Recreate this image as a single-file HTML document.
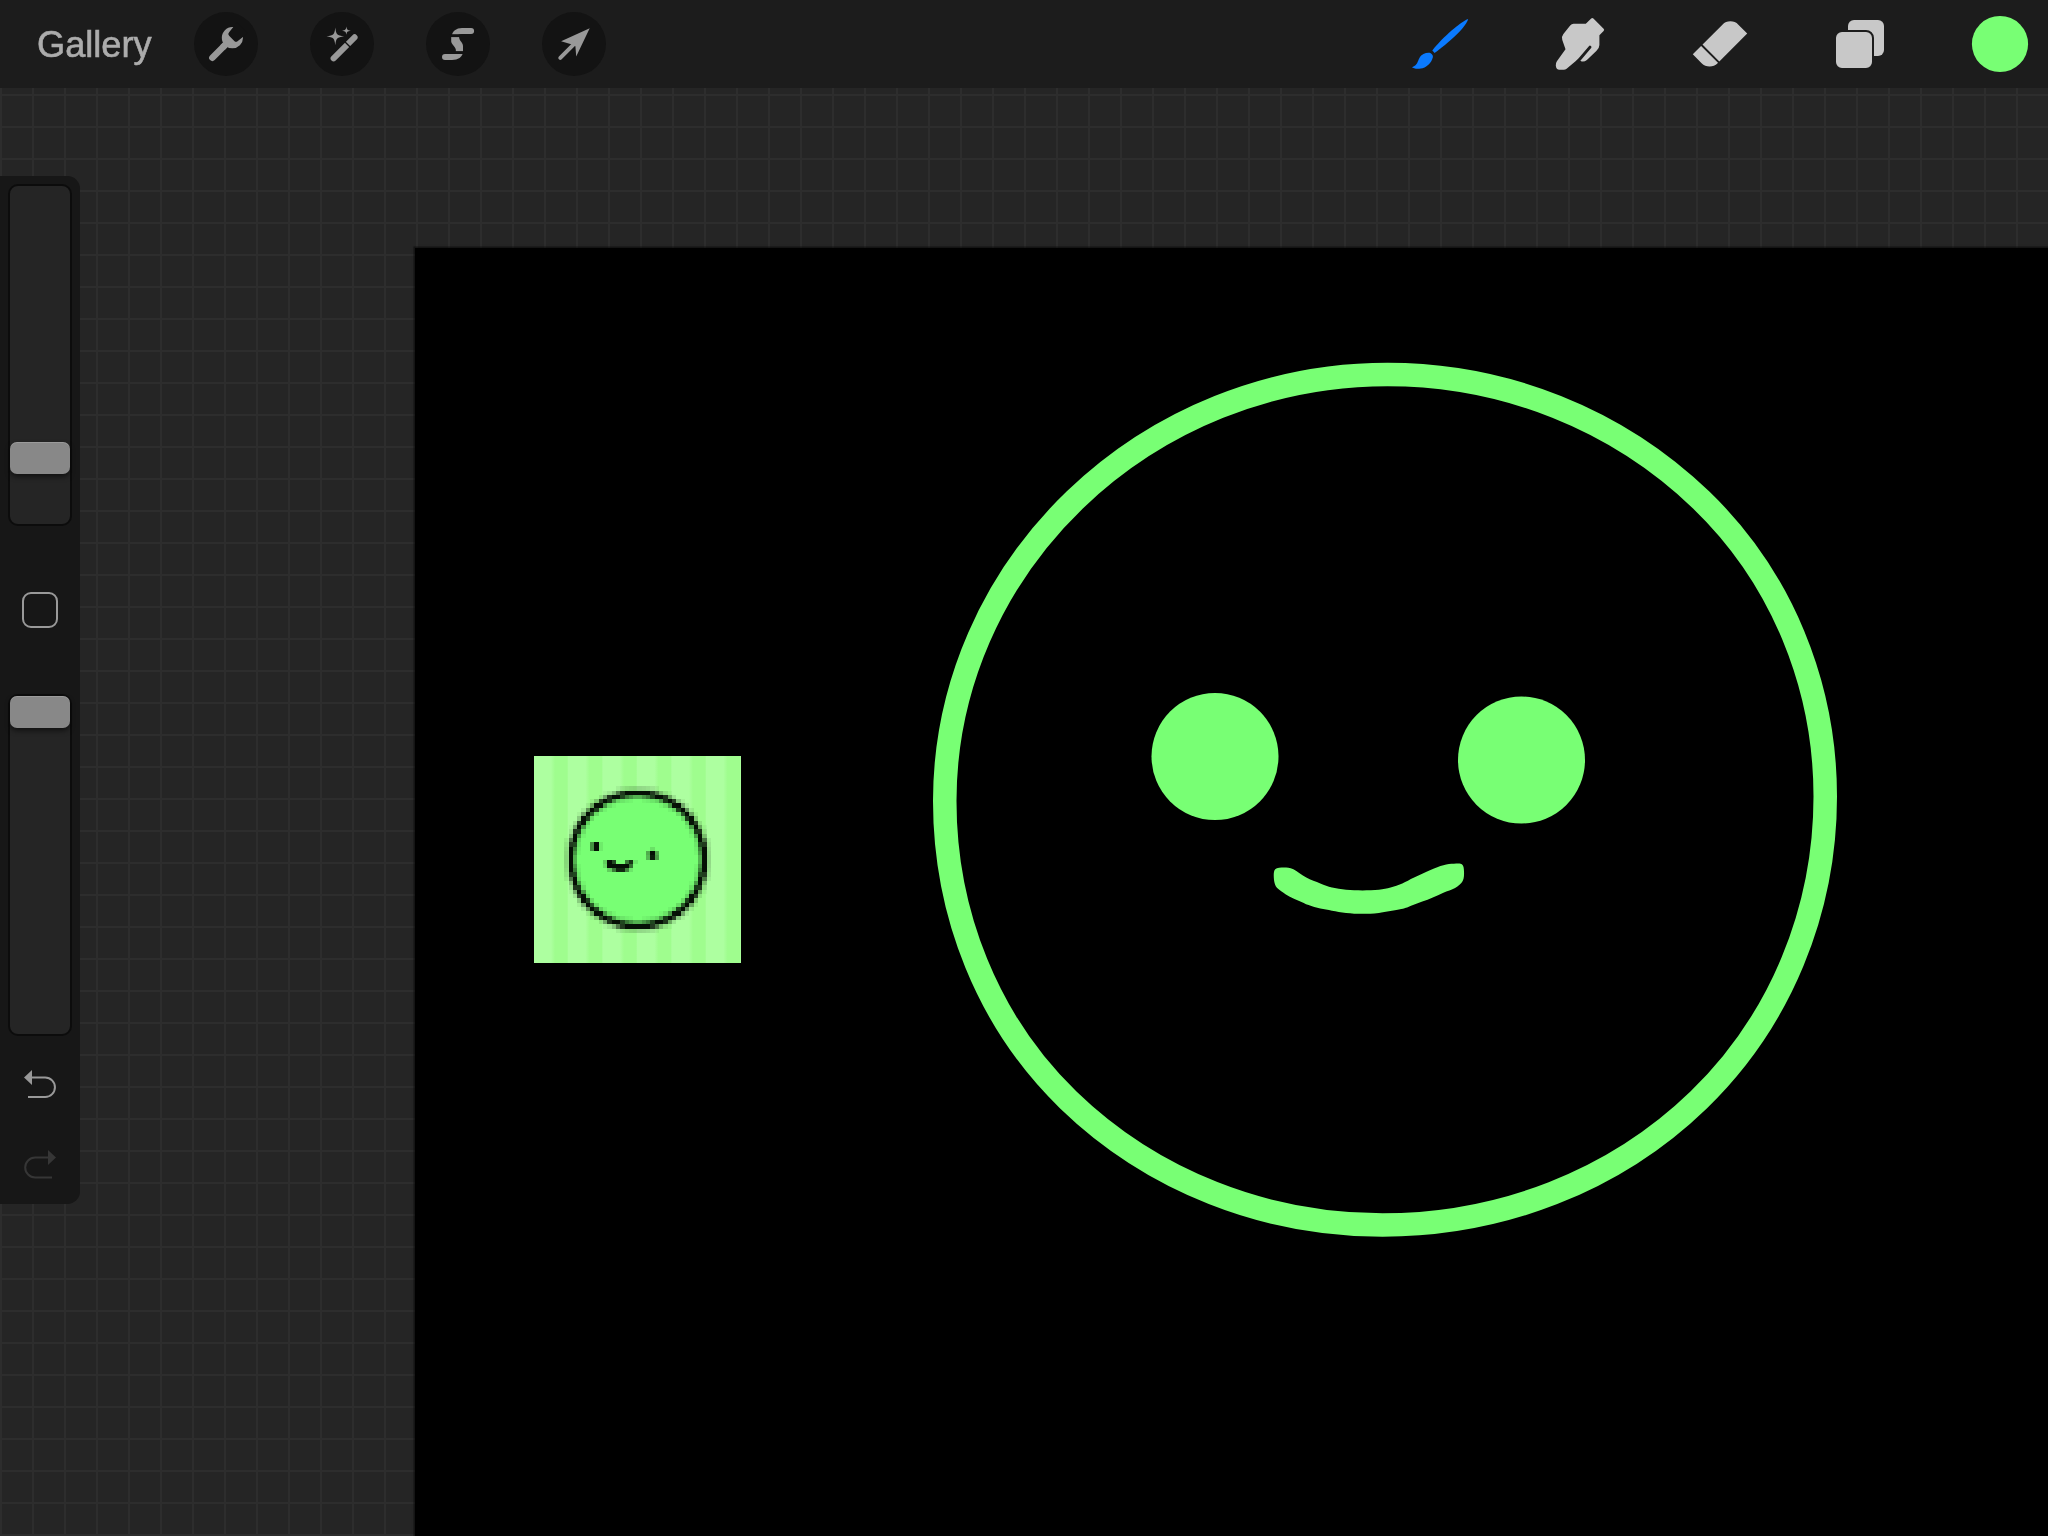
<!DOCTYPE html>
<html>
<head>
<meta charset="utf-8">
<title>Procreate</title>
<style>
html,body{margin:0;padding:0;}
body{width:2048px;height:1536px;overflow:hidden;position:relative;background:#252525;font-family:"Liberation Sans",sans-serif;}
#grid{position:absolute;left:0;top:0;width:2048px;height:1536px;
 background-color:#252525;
 background-image:
  linear-gradient(to right,#2d2d2d 0,#2d2d2d 2px,transparent 2px),
  linear-gradient(to bottom,#2d2d2d 0,#2d2d2d 2px,transparent 2px);
 background-size:32px 32px,32px 32px;
 background-position:0 0,0 30px;}
#canvas{position:absolute;left:415px;top:248px;width:1633px;height:1288px;background:#000;box-shadow:0 0 0 1.6px rgba(0,0,0,0.38),0 0 3px 1.5px rgba(0,0,0,0.2);}
#topbar{position:absolute;left:0;top:0;width:2048px;height:88px;background:#1c1c1c;}
#gallery{position:absolute;left:36.6px;top:24.2px;font-size:36.2px;line-height:42px;color:#adadad;letter-spacing:0px;-webkit-text-stroke:0.6px #adadad;will-change:transform;opacity:0.999;}
#sidebar{position:absolute;left:0;top:176px;width:80px;height:1028px;background:#171717;border-radius:0 12.5px 12.5px 0;}
.track{position:absolute;left:8px;width:60px;height:338px;border:2px solid #0c0c0c;border-radius:10px;background:#252525;}
.thumb{position:absolute;left:10px;width:60px;height:32px;border-radius:7px;background:#888888;box-shadow:0 3px 5px rgba(0,0,0,0.5), inset 0 1px 0 rgba(255,255,255,0.16);}
#sq{position:absolute;left:22px;top:416px;width:32px;height:32px;border:2px solid #999;border-radius:9px;}
svg{position:absolute;left:0;top:0;}
</style>
</head>
<body>
<div id="grid"></div>
<div id="canvas"></div>

<svg id="art" width="2048" height="1536" viewBox="0 0 2048 1536">
  <!-- big face -->
  <path d="M1825.25,796.50 C1825.25,910.65 1780.62,1020.62 1698.60,1100.00 C1614.10,1181.78 1500.10,1225.00 1382.50,1225.00 C1265.51,1225.00 1152.34,1181.40 1068.30,1100.00 C987.64,1021.88 944.75,913.29 944.75,801.00 C944.75,687.18 992.73,578.97 1074.70,500.00 C1158.66,419.12 1270.92,374.50 1387.50,374.50 C1504.37,374.50 1617.06,418.89 1701.20,500.00 C1781.53,577.44 1825.25,684.92 1825.25,796.50 Z" fill="none" stroke="#78ff74" stroke-width="23.5"/>
  <circle cx="1215" cy="756.5" r="63.5" fill="#78ff74"/>
  <circle cx="1521.5" cy="760" r="63.5" fill="#78ff74"/>
  <path d="M1275.2,869.3 C1276.9,867.6 1281.0,867.5 1284.0,867.5 C1287.0,867.5 1289.6,867.6 1293.4,869.3 C1297.1,871.0 1301.8,875.2 1306.3,877.5 C1310.7,879.8 1316.0,881.7 1320.3,883.4 C1324.6,885.0 1327.7,886.4 1332.0,887.5 C1336.3,888.5 1341.0,889.3 1346.1,889.8 C1351.2,890.3 1357.0,890.4 1362.5,890.4 C1368.0,890.4 1374.2,890.3 1378.9,889.8 C1383.6,889.3 1386.7,888.5 1390.6,887.5 C1394.5,886.4 1398.4,885.0 1402.3,883.4 C1406.3,881.7 1409.4,879.7 1414.1,877.5 C1418.8,875.3 1425.6,871.9 1430.5,869.9 C1435.4,867.8 1439.5,866.2 1443.4,865.2 C1447.3,864.2 1450.8,863.9 1453.9,863.8 C1457.0,863.7 1460.4,863.1 1462.1,864.4 C1463.8,865.7 1463.9,868.9 1464.0,871.6 C1464.1,874.4 1464.2,878.3 1462.7,881.0 C1461.2,883.8 1458.3,886.1 1455.1,888.0 C1451.9,890.0 1447.1,891.2 1443.4,892.7 C1439.7,894.3 1436.3,896.0 1432.8,897.4 C1429.3,898.9 1425.8,900.2 1422.3,901.5 C1418.8,902.9 1415.2,904.1 1411.7,905.4 C1408.2,906.7 1406.6,907.9 1401.2,909.1 C1395.7,910.4 1385.4,912.1 1378.9,912.9 C1372.5,913.7 1368.0,913.8 1362.5,913.8 C1357.0,913.8 1351.2,913.4 1346.1,912.9 C1341.0,912.4 1336.3,911.4 1332.0,910.7 C1327.7,909.9 1324.2,909.5 1320.3,908.6 C1316.4,907.6 1312.1,906.3 1308.6,905.0 C1305.1,903.8 1302.3,902.3 1299.2,900.9 C1296.1,899.6 1292.8,898.4 1289.8,896.8 C1286.9,895.3 1284.0,893.3 1281.6,891.6 C1279.3,889.8 1277.1,888.6 1275.8,886.3 C1274.5,883.9 1273.9,880.3 1273.8,877.5 C1273.7,874.7 1273.5,871.0 1275.2,869.3 Z" fill="#78ff74"/>
  <!-- thumbnail -->
  <defs>
    <linearGradient id="stripes" x1="0" y1="0" x2="34.5" y2="0" gradientUnits="userSpaceOnUse" spreadMethod="repeat">
      <stop offset="0" stop-color="#adffa0"/>
      <stop offset="0.49" stop-color="#adffa0"/>
      <stop offset="0.61" stop-color="#9ffd8e"/>
      <stop offset="0.96" stop-color="#9ffd8e"/>
      <stop offset="1" stop-color="#adffa0"/>
    </linearGradient>
  </defs>
  <g transform="translate(534,756)" shape-rendering="crispEdges">
<rect x="0" y="0" width="207" height="207" fill="url(#stripes)"/>
<circle cx="103.5" cy="103.5" r="66.6" fill="#78ff74" shape-rendering="auto"/>
<rect x="81.94" y="30.19" width="4.33" height="4.33" fill="#051005" fill-opacity="0.06"/>
<rect x="86.25" y="30.19" width="4.33" height="4.33" fill="#051005" fill-opacity="0.10"/>
<rect x="90.56" y="30.19" width="4.33" height="4.33" fill="#051005" fill-opacity="0.13"/>
<rect x="94.88" y="30.19" width="4.33" height="4.33" fill="#051005" fill-opacity="0.15"/>
<rect x="99.19" y="30.19" width="8.64" height="4.33" fill="#051005" fill-opacity="0.16"/>
<rect x="107.81" y="30.19" width="4.33" height="4.33" fill="#051005" fill-opacity="0.15"/>
<rect x="112.12" y="30.19" width="4.33" height="4.33" fill="#051005" fill-opacity="0.13"/>
<rect x="116.44" y="30.19" width="4.33" height="4.33" fill="#051005" fill-opacity="0.10"/>
<rect x="120.75" y="30.19" width="4.33" height="4.33" fill="#051005" fill-opacity="0.06"/>
<rect x="69.00" y="34.50" width="4.33" height="4.33" fill="#051005" fill-opacity="0.04"/>
<rect x="73.31" y="34.50" width="4.33" height="4.33" fill="#051005" fill-opacity="0.11"/>
<rect x="77.62" y="34.50" width="4.33" height="4.33" fill="#051005" fill-opacity="0.26"/>
<rect x="81.94" y="34.50" width="4.33" height="4.33" fill="#051005" fill-opacity="0.57"/>
<rect x="86.25" y="34.50" width="4.33" height="4.33" fill="#051005" fill-opacity="0.82"/>
<rect x="90.56" y="34.50" width="25.89" height="4.33" fill="#051005" fill-opacity="1.00"/>
<rect x="116.44" y="34.50" width="4.33" height="4.33" fill="#051005" fill-opacity="0.82"/>
<rect x="120.75" y="34.50" width="4.33" height="4.33" fill="#051005" fill-opacity="0.57"/>
<rect x="125.06" y="34.50" width="4.33" height="4.33" fill="#051005" fill-opacity="0.26"/>
<rect x="129.38" y="34.50" width="4.33" height="4.33" fill="#051005" fill-opacity="0.11"/>
<rect x="133.69" y="34.50" width="4.33" height="4.33" fill="#051005" fill-opacity="0.04"/>
<rect x="64.69" y="38.81" width="4.33" height="4.33" fill="#051005" fill-opacity="0.11"/>
<rect x="69.00" y="38.81" width="4.33" height="4.33" fill="#051005" fill-opacity="0.37"/>
<rect x="73.31" y="38.81" width="4.33" height="4.33" fill="#051005" fill-opacity="0.84"/>
<rect x="77.62" y="38.81" width="8.64" height="4.33" fill="#051005" fill-opacity="1.00"/>
<rect x="86.25" y="38.81" width="4.33" height="4.33" fill="#051005" fill-opacity="0.77"/>
<rect x="90.56" y="38.81" width="4.33" height="4.33" fill="#051005" fill-opacity="0.55"/>
<rect x="94.88" y="38.81" width="4.33" height="4.33" fill="#051005" fill-opacity="0.43"/>
<rect x="99.19" y="38.81" width="8.64" height="4.33" fill="#051005" fill-opacity="0.32"/>
<rect x="107.81" y="38.81" width="4.33" height="4.33" fill="#051005" fill-opacity="0.43"/>
<rect x="112.12" y="38.81" width="4.33" height="4.33" fill="#051005" fill-opacity="0.55"/>
<rect x="116.44" y="38.81" width="4.33" height="4.33" fill="#051005" fill-opacity="0.77"/>
<rect x="120.75" y="38.81" width="8.64" height="4.33" fill="#051005" fill-opacity="1.00"/>
<rect x="129.38" y="38.81" width="4.33" height="4.33" fill="#051005" fill-opacity="0.84"/>
<rect x="133.69" y="38.81" width="4.33" height="4.33" fill="#051005" fill-opacity="0.37"/>
<rect x="138.00" y="38.81" width="4.33" height="4.33" fill="#051005" fill-opacity="0.11"/>
<rect x="56.06" y="43.12" width="4.33" height="4.33" fill="#051005" fill-opacity="0.05"/>
<rect x="60.38" y="43.12" width="4.33" height="4.33" fill="#051005" fill-opacity="0.22"/>
<rect x="64.69" y="43.12" width="4.33" height="4.33" fill="#051005" fill-opacity="0.78"/>
<rect x="69.00" y="43.12" width="4.33" height="4.33" fill="#051005" fill-opacity="1.00"/>
<rect x="73.31" y="43.12" width="4.33" height="4.33" fill="#051005" fill-opacity="0.83"/>
<rect x="77.62" y="43.12" width="4.33" height="4.33" fill="#051005" fill-opacity="0.41"/>
<rect x="81.94" y="43.12" width="4.33" height="4.33" fill="#051005" fill-opacity="0.16"/>
<rect x="86.25" y="43.12" width="4.33" height="4.33" fill="#051005" fill-opacity="0.10"/>
<rect x="90.56" y="43.12" width="4.33" height="4.33" fill="#051005" fill-opacity="0.06"/>
<rect x="94.88" y="43.12" width="4.33" height="4.33" fill="#051005" fill-opacity="0.04"/>
<rect x="107.81" y="43.12" width="4.33" height="4.33" fill="#051005" fill-opacity="0.04"/>
<rect x="112.12" y="43.12" width="4.33" height="4.33" fill="#051005" fill-opacity="0.06"/>
<rect x="116.44" y="43.12" width="4.33" height="4.33" fill="#051005" fill-opacity="0.10"/>
<rect x="120.75" y="43.12" width="4.33" height="4.33" fill="#051005" fill-opacity="0.16"/>
<rect x="125.06" y="43.12" width="4.33" height="4.33" fill="#051005" fill-opacity="0.41"/>
<rect x="129.38" y="43.12" width="4.33" height="4.33" fill="#051005" fill-opacity="0.83"/>
<rect x="133.69" y="43.12" width="4.33" height="4.33" fill="#051005" fill-opacity="1.00"/>
<rect x="138.00" y="43.12" width="4.33" height="4.33" fill="#051005" fill-opacity="0.78"/>
<rect x="142.31" y="43.12" width="4.33" height="4.33" fill="#051005" fill-opacity="0.22"/>
<rect x="146.62" y="43.12" width="4.33" height="4.33" fill="#051005" fill-opacity="0.05"/>
<rect x="51.75" y="47.44" width="4.33" height="4.33" fill="#051005" fill-opacity="0.07"/>
<rect x="56.06" y="47.44" width="4.33" height="4.33" fill="#051005" fill-opacity="0.36"/>
<rect x="60.38" y="47.44" width="4.33" height="4.33" fill="#051005" fill-opacity="1.00"/>
<rect x="64.69" y="47.44" width="4.33" height="4.33" fill="#051005" fill-opacity="0.99"/>
<rect x="69.00" y="47.44" width="4.33" height="4.33" fill="#051005" fill-opacity="0.42"/>
<rect x="73.31" y="47.44" width="4.33" height="4.33" fill="#051005" fill-opacity="0.12"/>
<rect x="77.62" y="47.44" width="4.33" height="4.33" fill="#051005" fill-opacity="0.04"/>
<rect x="125.06" y="47.44" width="4.33" height="4.33" fill="#051005" fill-opacity="0.04"/>
<rect x="129.38" y="47.44" width="4.33" height="4.33" fill="#051005" fill-opacity="0.12"/>
<rect x="133.69" y="47.44" width="4.33" height="4.33" fill="#051005" fill-opacity="0.42"/>
<rect x="138.00" y="47.44" width="4.33" height="4.33" fill="#051005" fill-opacity="0.99"/>
<rect x="142.31" y="47.44" width="4.33" height="4.33" fill="#051005" fill-opacity="1.00"/>
<rect x="146.62" y="47.44" width="4.33" height="4.33" fill="#051005" fill-opacity="0.36"/>
<rect x="150.94" y="47.44" width="4.33" height="4.33" fill="#051005" fill-opacity="0.07"/>
<rect x="47.44" y="51.75" width="4.33" height="4.33" fill="#051005" fill-opacity="0.07"/>
<rect x="51.75" y="51.75" width="4.33" height="4.33" fill="#051005" fill-opacity="0.45"/>
<rect x="56.06" y="51.75" width="4.33" height="4.33" fill="#051005" fill-opacity="1.00"/>
<rect x="60.38" y="51.75" width="4.33" height="4.33" fill="#051005" fill-opacity="0.80"/>
<rect x="64.69" y="51.75" width="4.33" height="4.33" fill="#051005" fill-opacity="0.19"/>
<rect x="69.00" y="51.75" width="4.33" height="4.33" fill="#051005" fill-opacity="0.05"/>
<rect x="133.69" y="51.75" width="4.33" height="4.33" fill="#051005" fill-opacity="0.05"/>
<rect x="138.00" y="51.75" width="4.33" height="4.33" fill="#051005" fill-opacity="0.19"/>
<rect x="142.31" y="51.75" width="4.33" height="4.33" fill="#051005" fill-opacity="0.80"/>
<rect x="146.62" y="51.75" width="4.33" height="4.33" fill="#051005" fill-opacity="1.00"/>
<rect x="150.94" y="51.75" width="4.33" height="4.33" fill="#051005" fill-opacity="0.45"/>
<rect x="155.25" y="51.75" width="4.33" height="4.33" fill="#051005" fill-opacity="0.07"/>
<rect x="43.12" y="56.06" width="4.33" height="4.33" fill="#051005" fill-opacity="0.05"/>
<rect x="47.44" y="56.06" width="4.33" height="4.33" fill="#051005" fill-opacity="0.36"/>
<rect x="51.75" y="56.06" width="4.33" height="4.33" fill="#051005" fill-opacity="1.00"/>
<rect x="56.06" y="56.06" width="4.33" height="4.33" fill="#051005" fill-opacity="0.69"/>
<rect x="60.38" y="56.06" width="4.33" height="4.33" fill="#051005" fill-opacity="0.14"/>
<rect x="142.31" y="56.06" width="4.33" height="4.33" fill="#051005" fill-opacity="0.14"/>
<rect x="146.62" y="56.06" width="4.33" height="4.33" fill="#051005" fill-opacity="0.69"/>
<rect x="150.94" y="56.06" width="4.33" height="4.33" fill="#051005" fill-opacity="1.00"/>
<rect x="155.25" y="56.06" width="4.33" height="4.33" fill="#051005" fill-opacity="0.36"/>
<rect x="159.56" y="56.06" width="4.33" height="4.33" fill="#051005" fill-opacity="0.05"/>
<rect x="43.12" y="60.38" width="4.33" height="4.33" fill="#051005" fill-opacity="0.22"/>
<rect x="47.44" y="60.38" width="4.33" height="4.33" fill="#051005" fill-opacity="1.00"/>
<rect x="51.75" y="60.38" width="4.33" height="4.33" fill="#051005" fill-opacity="0.80"/>
<rect x="56.06" y="60.38" width="4.33" height="4.33" fill="#051005" fill-opacity="0.14"/>
<rect x="146.62" y="60.38" width="4.33" height="4.33" fill="#051005" fill-opacity="0.14"/>
<rect x="150.94" y="60.38" width="4.33" height="4.33" fill="#051005" fill-opacity="0.80"/>
<rect x="155.25" y="60.38" width="4.33" height="4.33" fill="#051005" fill-opacity="1.00"/>
<rect x="159.56" y="60.38" width="4.33" height="4.33" fill="#051005" fill-opacity="0.22"/>
<rect x="38.81" y="64.69" width="4.33" height="4.33" fill="#051005" fill-opacity="0.11"/>
<rect x="43.12" y="64.69" width="4.33" height="4.33" fill="#051005" fill-opacity="0.78"/>
<rect x="47.44" y="64.69" width="4.33" height="4.33" fill="#051005" fill-opacity="0.99"/>
<rect x="51.75" y="64.69" width="4.33" height="4.33" fill="#051005" fill-opacity="0.19"/>
<rect x="150.94" y="64.69" width="4.33" height="4.33" fill="#051005" fill-opacity="0.19"/>
<rect x="155.25" y="64.69" width="4.33" height="4.33" fill="#051005" fill-opacity="0.99"/>
<rect x="159.56" y="64.69" width="4.33" height="4.33" fill="#051005" fill-opacity="0.78"/>
<rect x="163.88" y="64.69" width="4.33" height="4.33" fill="#051005" fill-opacity="0.11"/>
<rect x="34.50" y="69.00" width="4.33" height="4.33" fill="#051005" fill-opacity="0.04"/>
<rect x="38.81" y="69.00" width="4.33" height="4.33" fill="#051005" fill-opacity="0.37"/>
<rect x="43.12" y="69.00" width="4.33" height="4.33" fill="#051005" fill-opacity="1.00"/>
<rect x="47.44" y="69.00" width="4.33" height="4.33" fill="#051005" fill-opacity="0.42"/>
<rect x="51.75" y="69.00" width="4.33" height="4.33" fill="#051005" fill-opacity="0.05"/>
<rect x="150.94" y="69.00" width="4.33" height="4.33" fill="#051005" fill-opacity="0.05"/>
<rect x="155.25" y="69.00" width="4.33" height="4.33" fill="#051005" fill-opacity="0.42"/>
<rect x="159.56" y="69.00" width="4.33" height="4.33" fill="#051005" fill-opacity="1.00"/>
<rect x="163.88" y="69.00" width="4.33" height="4.33" fill="#051005" fill-opacity="0.37"/>
<rect x="168.19" y="69.00" width="4.33" height="4.33" fill="#051005" fill-opacity="0.04"/>
<rect x="34.50" y="73.31" width="4.33" height="4.33" fill="#051005" fill-opacity="0.11"/>
<rect x="38.81" y="73.31" width="4.33" height="4.33" fill="#051005" fill-opacity="0.84"/>
<rect x="43.12" y="73.31" width="4.33" height="4.33" fill="#051005" fill-opacity="0.83"/>
<rect x="47.44" y="73.31" width="4.33" height="4.33" fill="#051005" fill-opacity="0.12"/>
<rect x="155.25" y="73.31" width="4.33" height="4.33" fill="#051005" fill-opacity="0.12"/>
<rect x="159.56" y="73.31" width="4.33" height="4.33" fill="#051005" fill-opacity="0.83"/>
<rect x="163.88" y="73.31" width="4.33" height="4.33" fill="#051005" fill-opacity="0.84"/>
<rect x="168.19" y="73.31" width="4.33" height="4.33" fill="#051005" fill-opacity="0.11"/>
<rect x="34.50" y="77.62" width="4.33" height="4.33" fill="#051005" fill-opacity="0.26"/>
<rect x="38.81" y="77.62" width="4.33" height="4.33" fill="#051005" fill-opacity="1.00"/>
<rect x="43.12" y="77.62" width="4.33" height="4.33" fill="#051005" fill-opacity="0.41"/>
<rect x="47.44" y="77.62" width="4.33" height="4.33" fill="#051005" fill-opacity="0.04"/>
<rect x="155.25" y="77.62" width="4.33" height="4.33" fill="#051005" fill-opacity="0.04"/>
<rect x="159.56" y="77.62" width="4.33" height="4.33" fill="#051005" fill-opacity="0.41"/>
<rect x="163.88" y="77.62" width="4.33" height="4.33" fill="#051005" fill-opacity="1.00"/>
<rect x="168.19" y="77.62" width="4.33" height="4.33" fill="#051005" fill-opacity="0.26"/>
<rect x="30.19" y="81.94" width="4.33" height="4.33" fill="#051005" fill-opacity="0.06"/>
<rect x="34.50" y="81.94" width="4.33" height="4.33" fill="#051005" fill-opacity="0.57"/>
<rect x="38.81" y="81.94" width="4.33" height="4.33" fill="#051005" fill-opacity="1.00"/>
<rect x="43.12" y="81.94" width="4.33" height="4.33" fill="#051005" fill-opacity="0.16"/>
<rect x="159.56" y="81.94" width="4.33" height="4.33" fill="#051005" fill-opacity="0.16"/>
<rect x="163.88" y="81.94" width="4.33" height="4.33" fill="#051005" fill-opacity="1.00"/>
<rect x="168.19" y="81.94" width="4.33" height="4.33" fill="#051005" fill-opacity="0.57"/>
<rect x="172.50" y="81.94" width="4.33" height="4.33" fill="#051005" fill-opacity="0.06"/>
<rect x="30.19" y="86.25" width="4.33" height="4.33" fill="#051005" fill-opacity="0.10"/>
<rect x="34.50" y="86.25" width="4.33" height="4.33" fill="#051005" fill-opacity="0.82"/>
<rect x="38.81" y="86.25" width="4.33" height="4.33" fill="#051005" fill-opacity="0.77"/>
<rect x="43.12" y="86.25" width="4.33" height="4.33" fill="#051005" fill-opacity="0.10"/>
<rect x="159.56" y="86.25" width="4.33" height="4.33" fill="#051005" fill-opacity="0.10"/>
<rect x="163.88" y="86.25" width="4.33" height="4.33" fill="#051005" fill-opacity="0.77"/>
<rect x="168.19" y="86.25" width="4.33" height="4.33" fill="#051005" fill-opacity="0.82"/>
<rect x="172.50" y="86.25" width="4.33" height="4.33" fill="#051005" fill-opacity="0.10"/>
<rect x="30.19" y="90.56" width="4.33" height="4.33" fill="#051005" fill-opacity="0.13"/>
<rect x="34.50" y="90.56" width="4.33" height="4.33" fill="#051005" fill-opacity="1.00"/>
<rect x="38.81" y="90.56" width="4.33" height="4.33" fill="#051005" fill-opacity="0.55"/>
<rect x="43.12" y="90.56" width="4.33" height="4.33" fill="#051005" fill-opacity="0.06"/>
<rect x="159.56" y="90.56" width="4.33" height="4.33" fill="#051005" fill-opacity="0.06"/>
<rect x="163.88" y="90.56" width="4.33" height="4.33" fill="#051005" fill-opacity="0.55"/>
<rect x="168.19" y="90.56" width="4.33" height="4.33" fill="#051005" fill-opacity="1.00"/>
<rect x="172.50" y="90.56" width="4.33" height="4.33" fill="#051005" fill-opacity="0.13"/>
<rect x="30.19" y="94.88" width="4.33" height="4.33" fill="#051005" fill-opacity="0.15"/>
<rect x="34.50" y="94.88" width="4.33" height="4.33" fill="#051005" fill-opacity="1.00"/>
<rect x="38.81" y="94.88" width="4.33" height="4.33" fill="#051005" fill-opacity="0.43"/>
<rect x="43.12" y="94.88" width="4.33" height="4.33" fill="#051005" fill-opacity="0.04"/>
<rect x="159.56" y="94.88" width="4.33" height="4.33" fill="#051005" fill-opacity="0.04"/>
<rect x="163.88" y="94.88" width="4.33" height="4.33" fill="#051005" fill-opacity="0.43"/>
<rect x="168.19" y="94.88" width="4.33" height="4.33" fill="#051005" fill-opacity="1.00"/>
<rect x="172.50" y="94.88" width="4.33" height="4.33" fill="#051005" fill-opacity="0.15"/>
<rect x="30.19" y="99.19" width="4.33" height="4.33" fill="#051005" fill-opacity="0.16"/>
<rect x="34.50" y="99.19" width="4.33" height="4.33" fill="#051005" fill-opacity="1.00"/>
<rect x="38.81" y="99.19" width="4.33" height="4.33" fill="#051005" fill-opacity="0.32"/>
<rect x="163.88" y="99.19" width="4.33" height="4.33" fill="#051005" fill-opacity="0.32"/>
<rect x="168.19" y="99.19" width="4.33" height="4.33" fill="#051005" fill-opacity="1.00"/>
<rect x="172.50" y="99.19" width="4.33" height="4.33" fill="#051005" fill-opacity="0.16"/>
<rect x="30.19" y="103.50" width="4.33" height="4.33" fill="#051005" fill-opacity="0.16"/>
<rect x="34.50" y="103.50" width="4.33" height="4.33" fill="#051005" fill-opacity="1.00"/>
<rect x="38.81" y="103.50" width="4.33" height="4.33" fill="#051005" fill-opacity="0.32"/>
<rect x="163.88" y="103.50" width="4.33" height="4.33" fill="#051005" fill-opacity="0.32"/>
<rect x="168.19" y="103.50" width="4.33" height="4.33" fill="#051005" fill-opacity="1.00"/>
<rect x="172.50" y="103.50" width="4.33" height="4.33" fill="#051005" fill-opacity="0.16"/>
<rect x="30.19" y="107.81" width="4.33" height="4.33" fill="#051005" fill-opacity="0.15"/>
<rect x="34.50" y="107.81" width="4.33" height="4.33" fill="#051005" fill-opacity="1.00"/>
<rect x="38.81" y="107.81" width="4.33" height="4.33" fill="#051005" fill-opacity="0.43"/>
<rect x="43.12" y="107.81" width="4.33" height="4.33" fill="#051005" fill-opacity="0.04"/>
<rect x="159.56" y="107.81" width="4.33" height="4.33" fill="#051005" fill-opacity="0.04"/>
<rect x="163.88" y="107.81" width="4.33" height="4.33" fill="#051005" fill-opacity="0.43"/>
<rect x="168.19" y="107.81" width="4.33" height="4.33" fill="#051005" fill-opacity="1.00"/>
<rect x="172.50" y="107.81" width="4.33" height="4.33" fill="#051005" fill-opacity="0.15"/>
<rect x="30.19" y="112.12" width="4.33" height="4.33" fill="#051005" fill-opacity="0.13"/>
<rect x="34.50" y="112.12" width="4.33" height="4.33" fill="#051005" fill-opacity="1.00"/>
<rect x="38.81" y="112.12" width="4.33" height="4.33" fill="#051005" fill-opacity="0.55"/>
<rect x="43.12" y="112.12" width="4.33" height="4.33" fill="#051005" fill-opacity="0.06"/>
<rect x="159.56" y="112.12" width="4.33" height="4.33" fill="#051005" fill-opacity="0.06"/>
<rect x="163.88" y="112.12" width="4.33" height="4.33" fill="#051005" fill-opacity="0.55"/>
<rect x="168.19" y="112.12" width="4.33" height="4.33" fill="#051005" fill-opacity="1.00"/>
<rect x="172.50" y="112.12" width="4.33" height="4.33" fill="#051005" fill-opacity="0.13"/>
<rect x="30.19" y="116.44" width="4.33" height="4.33" fill="#051005" fill-opacity="0.10"/>
<rect x="34.50" y="116.44" width="4.33" height="4.33" fill="#051005" fill-opacity="0.82"/>
<rect x="38.81" y="116.44" width="4.33" height="4.33" fill="#051005" fill-opacity="0.77"/>
<rect x="43.12" y="116.44" width="4.33" height="4.33" fill="#051005" fill-opacity="0.10"/>
<rect x="159.56" y="116.44" width="4.33" height="4.33" fill="#051005" fill-opacity="0.10"/>
<rect x="163.88" y="116.44" width="4.33" height="4.33" fill="#051005" fill-opacity="0.77"/>
<rect x="168.19" y="116.44" width="4.33" height="4.33" fill="#051005" fill-opacity="0.82"/>
<rect x="172.50" y="116.44" width="4.33" height="4.33" fill="#051005" fill-opacity="0.10"/>
<rect x="30.19" y="120.75" width="4.33" height="4.33" fill="#051005" fill-opacity="0.06"/>
<rect x="34.50" y="120.75" width="4.33" height="4.33" fill="#051005" fill-opacity="0.57"/>
<rect x="38.81" y="120.75" width="4.33" height="4.33" fill="#051005" fill-opacity="1.00"/>
<rect x="43.12" y="120.75" width="4.33" height="4.33" fill="#051005" fill-opacity="0.16"/>
<rect x="159.56" y="120.75" width="4.33" height="4.33" fill="#051005" fill-opacity="0.16"/>
<rect x="163.88" y="120.75" width="4.33" height="4.33" fill="#051005" fill-opacity="1.00"/>
<rect x="168.19" y="120.75" width="4.33" height="4.33" fill="#051005" fill-opacity="0.57"/>
<rect x="172.50" y="120.75" width="4.33" height="4.33" fill="#051005" fill-opacity="0.06"/>
<rect x="34.50" y="125.06" width="4.33" height="4.33" fill="#051005" fill-opacity="0.26"/>
<rect x="38.81" y="125.06" width="4.33" height="4.33" fill="#051005" fill-opacity="1.00"/>
<rect x="43.12" y="125.06" width="4.33" height="4.33" fill="#051005" fill-opacity="0.41"/>
<rect x="47.44" y="125.06" width="4.33" height="4.33" fill="#051005" fill-opacity="0.04"/>
<rect x="155.25" y="125.06" width="4.33" height="4.33" fill="#051005" fill-opacity="0.04"/>
<rect x="159.56" y="125.06" width="4.33" height="4.33" fill="#051005" fill-opacity="0.41"/>
<rect x="163.88" y="125.06" width="4.33" height="4.33" fill="#051005" fill-opacity="1.00"/>
<rect x="168.19" y="125.06" width="4.33" height="4.33" fill="#051005" fill-opacity="0.26"/>
<rect x="34.50" y="129.38" width="4.33" height="4.33" fill="#051005" fill-opacity="0.11"/>
<rect x="38.81" y="129.38" width="4.33" height="4.33" fill="#051005" fill-opacity="0.84"/>
<rect x="43.12" y="129.38" width="4.33" height="4.33" fill="#051005" fill-opacity="0.83"/>
<rect x="47.44" y="129.38" width="4.33" height="4.33" fill="#051005" fill-opacity="0.12"/>
<rect x="155.25" y="129.38" width="4.33" height="4.33" fill="#051005" fill-opacity="0.12"/>
<rect x="159.56" y="129.38" width="4.33" height="4.33" fill="#051005" fill-opacity="0.83"/>
<rect x="163.88" y="129.38" width="4.33" height="4.33" fill="#051005" fill-opacity="0.84"/>
<rect x="168.19" y="129.38" width="4.33" height="4.33" fill="#051005" fill-opacity="0.11"/>
<rect x="34.50" y="133.69" width="4.33" height="4.33" fill="#051005" fill-opacity="0.04"/>
<rect x="38.81" y="133.69" width="4.33" height="4.33" fill="#051005" fill-opacity="0.37"/>
<rect x="43.12" y="133.69" width="4.33" height="4.33" fill="#051005" fill-opacity="1.00"/>
<rect x="47.44" y="133.69" width="4.33" height="4.33" fill="#051005" fill-opacity="0.42"/>
<rect x="51.75" y="133.69" width="4.33" height="4.33" fill="#051005" fill-opacity="0.05"/>
<rect x="150.94" y="133.69" width="4.33" height="4.33" fill="#051005" fill-opacity="0.05"/>
<rect x="155.25" y="133.69" width="4.33" height="4.33" fill="#051005" fill-opacity="0.42"/>
<rect x="159.56" y="133.69" width="4.33" height="4.33" fill="#051005" fill-opacity="1.00"/>
<rect x="163.88" y="133.69" width="4.33" height="4.33" fill="#051005" fill-opacity="0.37"/>
<rect x="168.19" y="133.69" width="4.33" height="4.33" fill="#051005" fill-opacity="0.04"/>
<rect x="38.81" y="138.00" width="4.33" height="4.33" fill="#051005" fill-opacity="0.11"/>
<rect x="43.12" y="138.00" width="4.33" height="4.33" fill="#051005" fill-opacity="0.78"/>
<rect x="47.44" y="138.00" width="4.33" height="4.33" fill="#051005" fill-opacity="0.99"/>
<rect x="51.75" y="138.00" width="4.33" height="4.33" fill="#051005" fill-opacity="0.19"/>
<rect x="150.94" y="138.00" width="4.33" height="4.33" fill="#051005" fill-opacity="0.19"/>
<rect x="155.25" y="138.00" width="4.33" height="4.33" fill="#051005" fill-opacity="0.99"/>
<rect x="159.56" y="138.00" width="4.33" height="4.33" fill="#051005" fill-opacity="0.78"/>
<rect x="163.88" y="138.00" width="4.33" height="4.33" fill="#051005" fill-opacity="0.11"/>
<rect x="43.12" y="142.31" width="4.33" height="4.33" fill="#051005" fill-opacity="0.22"/>
<rect x="47.44" y="142.31" width="4.33" height="4.33" fill="#051005" fill-opacity="1.00"/>
<rect x="51.75" y="142.31" width="4.33" height="4.33" fill="#051005" fill-opacity="0.80"/>
<rect x="56.06" y="142.31" width="4.33" height="4.33" fill="#051005" fill-opacity="0.14"/>
<rect x="146.62" y="142.31" width="4.33" height="4.33" fill="#051005" fill-opacity="0.14"/>
<rect x="150.94" y="142.31" width="4.33" height="4.33" fill="#051005" fill-opacity="0.80"/>
<rect x="155.25" y="142.31" width="4.33" height="4.33" fill="#051005" fill-opacity="1.00"/>
<rect x="159.56" y="142.31" width="4.33" height="4.33" fill="#051005" fill-opacity="0.22"/>
<rect x="43.12" y="146.62" width="4.33" height="4.33" fill="#051005" fill-opacity="0.05"/>
<rect x="47.44" y="146.62" width="4.33" height="4.33" fill="#051005" fill-opacity="0.36"/>
<rect x="51.75" y="146.62" width="4.33" height="4.33" fill="#051005" fill-opacity="1.00"/>
<rect x="56.06" y="146.62" width="4.33" height="4.33" fill="#051005" fill-opacity="0.69"/>
<rect x="60.38" y="146.62" width="4.33" height="4.33" fill="#051005" fill-opacity="0.14"/>
<rect x="142.31" y="146.62" width="4.33" height="4.33" fill="#051005" fill-opacity="0.14"/>
<rect x="146.62" y="146.62" width="4.33" height="4.33" fill="#051005" fill-opacity="0.69"/>
<rect x="150.94" y="146.62" width="4.33" height="4.33" fill="#051005" fill-opacity="1.00"/>
<rect x="155.25" y="146.62" width="4.33" height="4.33" fill="#051005" fill-opacity="0.36"/>
<rect x="159.56" y="146.62" width="4.33" height="4.33" fill="#051005" fill-opacity="0.05"/>
<rect x="47.44" y="150.94" width="4.33" height="4.33" fill="#051005" fill-opacity="0.07"/>
<rect x="51.75" y="150.94" width="4.33" height="4.33" fill="#051005" fill-opacity="0.45"/>
<rect x="56.06" y="150.94" width="4.33" height="4.33" fill="#051005" fill-opacity="1.00"/>
<rect x="60.38" y="150.94" width="4.33" height="4.33" fill="#051005" fill-opacity="0.80"/>
<rect x="64.69" y="150.94" width="4.33" height="4.33" fill="#051005" fill-opacity="0.19"/>
<rect x="69.00" y="150.94" width="4.33" height="4.33" fill="#051005" fill-opacity="0.05"/>
<rect x="133.69" y="150.94" width="4.33" height="4.33" fill="#051005" fill-opacity="0.05"/>
<rect x="138.00" y="150.94" width="4.33" height="4.33" fill="#051005" fill-opacity="0.19"/>
<rect x="142.31" y="150.94" width="4.33" height="4.33" fill="#051005" fill-opacity="0.80"/>
<rect x="146.62" y="150.94" width="4.33" height="4.33" fill="#051005" fill-opacity="1.00"/>
<rect x="150.94" y="150.94" width="4.33" height="4.33" fill="#051005" fill-opacity="0.45"/>
<rect x="155.25" y="150.94" width="4.33" height="4.33" fill="#051005" fill-opacity="0.07"/>
<rect x="51.75" y="155.25" width="4.33" height="4.33" fill="#051005" fill-opacity="0.07"/>
<rect x="56.06" y="155.25" width="4.33" height="4.33" fill="#051005" fill-opacity="0.36"/>
<rect x="60.38" y="155.25" width="4.33" height="4.33" fill="#051005" fill-opacity="1.00"/>
<rect x="64.69" y="155.25" width="4.33" height="4.33" fill="#051005" fill-opacity="0.99"/>
<rect x="69.00" y="155.25" width="4.33" height="4.33" fill="#051005" fill-opacity="0.42"/>
<rect x="73.31" y="155.25" width="4.33" height="4.33" fill="#051005" fill-opacity="0.12"/>
<rect x="77.62" y="155.25" width="4.33" height="4.33" fill="#051005" fill-opacity="0.04"/>
<rect x="125.06" y="155.25" width="4.33" height="4.33" fill="#051005" fill-opacity="0.04"/>
<rect x="129.38" y="155.25" width="4.33" height="4.33" fill="#051005" fill-opacity="0.12"/>
<rect x="133.69" y="155.25" width="4.33" height="4.33" fill="#051005" fill-opacity="0.42"/>
<rect x="138.00" y="155.25" width="4.33" height="4.33" fill="#051005" fill-opacity="0.99"/>
<rect x="142.31" y="155.25" width="4.33" height="4.33" fill="#051005" fill-opacity="1.00"/>
<rect x="146.62" y="155.25" width="4.33" height="4.33" fill="#051005" fill-opacity="0.36"/>
<rect x="150.94" y="155.25" width="4.33" height="4.33" fill="#051005" fill-opacity="0.07"/>
<rect x="56.06" y="159.56" width="4.33" height="4.33" fill="#051005" fill-opacity="0.05"/>
<rect x="60.38" y="159.56" width="4.33" height="4.33" fill="#051005" fill-opacity="0.22"/>
<rect x="64.69" y="159.56" width="4.33" height="4.33" fill="#051005" fill-opacity="0.78"/>
<rect x="69.00" y="159.56" width="4.33" height="4.33" fill="#051005" fill-opacity="1.00"/>
<rect x="73.31" y="159.56" width="4.33" height="4.33" fill="#051005" fill-opacity="0.83"/>
<rect x="77.62" y="159.56" width="4.33" height="4.33" fill="#051005" fill-opacity="0.41"/>
<rect x="81.94" y="159.56" width="4.33" height="4.33" fill="#051005" fill-opacity="0.16"/>
<rect x="86.25" y="159.56" width="4.33" height="4.33" fill="#051005" fill-opacity="0.10"/>
<rect x="90.56" y="159.56" width="4.33" height="4.33" fill="#051005" fill-opacity="0.06"/>
<rect x="94.88" y="159.56" width="4.33" height="4.33" fill="#051005" fill-opacity="0.04"/>
<rect x="107.81" y="159.56" width="4.33" height="4.33" fill="#051005" fill-opacity="0.04"/>
<rect x="112.12" y="159.56" width="4.33" height="4.33" fill="#051005" fill-opacity="0.06"/>
<rect x="116.44" y="159.56" width="4.33" height="4.33" fill="#051005" fill-opacity="0.10"/>
<rect x="120.75" y="159.56" width="4.33" height="4.33" fill="#051005" fill-opacity="0.16"/>
<rect x="125.06" y="159.56" width="4.33" height="4.33" fill="#051005" fill-opacity="0.41"/>
<rect x="129.38" y="159.56" width="4.33" height="4.33" fill="#051005" fill-opacity="0.83"/>
<rect x="133.69" y="159.56" width="4.33" height="4.33" fill="#051005" fill-opacity="1.00"/>
<rect x="138.00" y="159.56" width="4.33" height="4.33" fill="#051005" fill-opacity="0.78"/>
<rect x="142.31" y="159.56" width="4.33" height="4.33" fill="#051005" fill-opacity="0.22"/>
<rect x="146.62" y="159.56" width="4.33" height="4.33" fill="#051005" fill-opacity="0.05"/>
<rect x="64.69" y="163.88" width="4.33" height="4.33" fill="#051005" fill-opacity="0.11"/>
<rect x="69.00" y="163.88" width="4.33" height="4.33" fill="#051005" fill-opacity="0.37"/>
<rect x="73.31" y="163.88" width="4.33" height="4.33" fill="#051005" fill-opacity="0.84"/>
<rect x="77.62" y="163.88" width="8.64" height="4.33" fill="#051005" fill-opacity="1.00"/>
<rect x="86.25" y="163.88" width="4.33" height="4.33" fill="#051005" fill-opacity="0.77"/>
<rect x="90.56" y="163.88" width="4.33" height="4.33" fill="#051005" fill-opacity="0.55"/>
<rect x="94.88" y="163.88" width="4.33" height="4.33" fill="#051005" fill-opacity="0.43"/>
<rect x="99.19" y="163.88" width="8.64" height="4.33" fill="#051005" fill-opacity="0.32"/>
<rect x="107.81" y="163.88" width="4.33" height="4.33" fill="#051005" fill-opacity="0.43"/>
<rect x="112.12" y="163.88" width="4.33" height="4.33" fill="#051005" fill-opacity="0.55"/>
<rect x="116.44" y="163.88" width="4.33" height="4.33" fill="#051005" fill-opacity="0.77"/>
<rect x="120.75" y="163.88" width="8.64" height="4.33" fill="#051005" fill-opacity="1.00"/>
<rect x="129.38" y="163.88" width="4.33" height="4.33" fill="#051005" fill-opacity="0.84"/>
<rect x="133.69" y="163.88" width="4.33" height="4.33" fill="#051005" fill-opacity="0.37"/>
<rect x="138.00" y="163.88" width="4.33" height="4.33" fill="#051005" fill-opacity="0.11"/>
<rect x="69.00" y="168.19" width="4.33" height="4.33" fill="#051005" fill-opacity="0.04"/>
<rect x="73.31" y="168.19" width="4.33" height="4.33" fill="#051005" fill-opacity="0.11"/>
<rect x="77.62" y="168.19" width="4.33" height="4.33" fill="#051005" fill-opacity="0.26"/>
<rect x="81.94" y="168.19" width="4.33" height="4.33" fill="#051005" fill-opacity="0.57"/>
<rect x="86.25" y="168.19" width="4.33" height="4.33" fill="#051005" fill-opacity="0.82"/>
<rect x="90.56" y="168.19" width="25.89" height="4.33" fill="#051005" fill-opacity="1.00"/>
<rect x="116.44" y="168.19" width="4.33" height="4.33" fill="#051005" fill-opacity="0.82"/>
<rect x="120.75" y="168.19" width="4.33" height="4.33" fill="#051005" fill-opacity="0.57"/>
<rect x="125.06" y="168.19" width="4.33" height="4.33" fill="#051005" fill-opacity="0.26"/>
<rect x="129.38" y="168.19" width="4.33" height="4.33" fill="#051005" fill-opacity="0.11"/>
<rect x="133.69" y="168.19" width="4.33" height="4.33" fill="#051005" fill-opacity="0.04"/>
<rect x="81.94" y="172.50" width="4.33" height="4.33" fill="#051005" fill-opacity="0.06"/>
<rect x="86.25" y="172.50" width="4.33" height="4.33" fill="#051005" fill-opacity="0.10"/>
<rect x="90.56" y="172.50" width="4.33" height="4.33" fill="#051005" fill-opacity="0.13"/>
<rect x="94.88" y="172.50" width="4.33" height="4.33" fill="#051005" fill-opacity="0.15"/>
<rect x="99.19" y="172.50" width="8.64" height="4.33" fill="#051005" fill-opacity="0.16"/>
<rect x="107.81" y="172.50" width="4.33" height="4.33" fill="#051005" fill-opacity="0.15"/>
<rect x="112.12" y="172.50" width="4.33" height="4.33" fill="#051005" fill-opacity="0.13"/>
<rect x="116.44" y="172.50" width="4.33" height="4.33" fill="#051005" fill-opacity="0.10"/>
<rect x="120.75" y="172.50" width="4.33" height="4.33" fill="#051005" fill-opacity="0.06"/>
<rect x="60.38" y="86.25" width="4.33" height="4.33" fill="#051005" fill-opacity="1.00"/>
<rect x="60.38" y="90.56" width="4.33" height="4.33" fill="#051005" fill-opacity="1.00"/>
<rect x="56.06" y="86.25" width="4.33" height="4.33" fill="#051005" fill-opacity="0.45"/>
<rect x="56.06" y="90.56" width="4.33" height="4.33" fill="#051005" fill-opacity="0.45"/>
<rect x="64.69" y="86.25" width="4.33" height="4.33" fill="#051005" fill-opacity="0.08"/>
<rect x="64.69" y="90.56" width="4.33" height="4.33" fill="#051005" fill-opacity="0.08"/>
<rect x="116.44" y="94.88" width="4.33" height="4.33" fill="#051005" fill-opacity="1.00"/>
<rect x="116.44" y="99.19" width="4.33" height="4.33" fill="#051005" fill-opacity="0.95"/>
<rect x="112.12" y="94.88" width="4.33" height="4.33" fill="#051005" fill-opacity="0.35"/>
<rect x="112.12" y="99.19" width="4.33" height="4.33" fill="#051005" fill-opacity="0.30"/>
<rect x="120.75" y="94.88" width="4.33" height="4.33" fill="#051005" fill-opacity="0.35"/>
<rect x="120.75" y="99.19" width="4.33" height="4.33" fill="#051005" fill-opacity="0.40"/>
<rect x="116.44" y="90.56" width="4.33" height="4.33" fill="#051005" fill-opacity="0.12"/>
<rect x="69.00" y="103.50" width="4.33" height="4.33" fill="#051005" fill-opacity="0.20"/>
<rect x="73.31" y="103.50" width="4.33" height="4.33" fill="#051005" fill-opacity="1.00"/>
<rect x="77.62" y="103.50" width="4.33" height="4.33" fill="#051005" fill-opacity="0.75"/>
<rect x="90.56" y="103.50" width="4.33" height="4.33" fill="#051005" fill-opacity="0.55"/>
<rect x="94.88" y="103.50" width="4.33" height="4.33" fill="#051005" fill-opacity="0.85"/>
<rect x="99.19" y="103.50" width="4.33" height="4.33" fill="#051005" fill-opacity="0.10"/>
<rect x="69.00" y="107.81" width="4.33" height="4.33" fill="#051005" fill-opacity="0.15"/>
<rect x="73.31" y="107.81" width="4.33" height="4.33" fill="#051005" fill-opacity="1.00"/>
<rect x="77.62" y="107.81" width="4.33" height="4.33" fill="#051005" fill-opacity="1.00"/>
<rect x="81.94" y="107.81" width="4.33" height="4.33" fill="#051005" fill-opacity="1.00"/>
<rect x="86.25" y="107.81" width="4.33" height="4.33" fill="#051005" fill-opacity="1.00"/>
<rect x="90.56" y="107.81" width="4.33" height="4.33" fill="#051005" fill-opacity="1.00"/>
<rect x="94.88" y="107.81" width="4.33" height="4.33" fill="#051005" fill-opacity="0.60"/>
<rect x="73.31" y="112.12" width="4.33" height="4.33" fill="#051005" fill-opacity="0.20"/>
<rect x="77.62" y="112.12" width="4.33" height="4.33" fill="#051005" fill-opacity="0.55"/>
<rect x="81.94" y="112.12" width="4.33" height="4.33" fill="#051005" fill-opacity="0.90"/>
<rect x="86.25" y="112.12" width="4.33" height="4.33" fill="#051005" fill-opacity="0.90"/>
<rect x="90.56" y="112.12" width="4.33" height="4.33" fill="#051005" fill-opacity="0.50"/>
<rect x="94.88" y="112.12" width="4.33" height="4.33" fill="#051005" fill-opacity="0.10"/>
</g>
</svg>

<div id="topbar"></div>
<div id="gallery">Gallery</div>

<svg id="icons" width="2048" height="88" viewBox="0 0 2048 88">
  <!-- button circles -->
  <circle cx="226" cy="44" r="32" fill="#131313"/>
  <circle cx="342" cy="44" r="32" fill="#131313"/>
  <circle cx="458" cy="44" r="32" fill="#131313"/>
  <circle cx="574" cy="44" r="32" fill="#131313"/>

  <!-- wrench -->
  <g transform="translate(232.4,37.7) rotate(45)">
    <line x1="0" y1="4" x2="0" y2="28.3" stroke="#999" stroke-width="6.5" stroke-linecap="round"/>
    <circle cx="0" cy="0" r="10.6" fill="#999"/>
    <path d="M-7.6,-14 L-6.15,-1.5 Q-6.15,1 -3.65,1 L3.65,1 Q6.15,1 6.15,-1.5 L7.6,-14 Z" fill="#131313"/>
    <path d="M-3.2,9.6 Q-3.2,12.5 -3.25,14 L3.25,14 Q3.2,12.5 3.2,9.6 Z" fill="#999"/>
  </g>

  <!-- magic wand -->
  <g>
    <line x1="333.6" y1="58.3" x2="354.6" y2="37.3" stroke="#999" stroke-width="6" stroke-linecap="round"/>
    <line x1="344.6" y1="41.4" x2="350.6" y2="47.4" stroke="#131313" stroke-width="1.4"/>
    <path transform="translate(335.3,36.4)" d="M0,-8.8 C0.9,-1.5 1.5,-0.9 8.8,0 C1.5,0.9 0.9,1.5 0,8.8 C-0.9,1.5 -1.5,0.9 -8.8,0 C-1.5,-0.9 -0.9,-1.5 0,-8.8 Z" fill="#999"/>
    <path transform="translate(346.4,30.7)" d="M0,-4.1 C0.5,-0.8 0.8,-0.5 4.4,0 C0.8,0.5 0.5,0.8 0,4.1 C-0.5,0.8 -0.8,0.5 -4.4,0 C-0.8,-0.5 -0.5,-0.8 0,-4.1 Z" fill="#999"/>
  </g>

  <!-- selection S -->
  <g>
    <path d="M471.1,31.1 L462,31.1 C457.5,31.1 454.8,33.5 454.8,36.5" fill="none" stroke="#999" stroke-width="6" stroke-linecap="round"/>
    <path d="M460,51.6 C460,54.7 457,57 452,57 L445,57" fill="none" stroke="#999" stroke-width="6" stroke-linecap="round"/>
    <path d="M451.2,36 L459.1,36 L459.2,38 C459.6,41 463,42.5 463,46 L463,52 L455.9,52 L455.8,49.5 C455.4,46.5 451.4,44.5 451.2,41.5 Z" fill="#999"/>
    <rect x="449" y="34.2" width="16" height="2.9" fill="#131313"/>
    <rect x="451" y="51.1" width="16" height="2.9" fill="#131313"/>
  </g>

  <!-- transform arrow -->
  <g>
    <path d="M589.7,28.2 L561.1,41.2 L572.0,44.6 L575.4,46.2 L576.2,56.6 Z" fill="#999"/>
    <line x1="560.3" y1="57.9" x2="573.5" y2="44.7" stroke="#999" stroke-width="4" stroke-linecap="round"/>
  </g>

  <!-- brush -->
  <g fill="#0a7aff">
    <path d="M1468.2,19.1 C1461,21.5 1443,37 1432.3,50.4 L1434.6,53 C1447,44 1465,29 1468.2,19.1 Z"/>
    <path d="M1430.7,53.2 C1432.5,54.5 1433.3,56 1432.8,57.5 C1432,61 1430,63 1429.2,63.9 C1426,67 1423,68.3 1420.8,68.6 C1417,69.3 1413,68.5 1412,67.3 C1415,66 1416.5,64 1417.2,62.9 C1418.2,61 1418.5,59.5 1419.3,58.2 C1420.3,56 1422,54.7 1423.4,54 C1426,52.8 1429,52.6 1430.7,53.2 Z"/>
  </g>

  <!-- smudge -->
  <g>
    <path d="M1591.2,18.6 Q1592.3,17.5 1593.4,18.6 L1603.6,28.8 Q1604.7,29.9 1603.6,31 L1599.4,35.2 L1599.4,45.1 Q1599.4,48.5 1596.3,50.9 L1586.9,60 Q1583.75,62.6 1580.6,61 Q1578.8,60 1578.5,58.7 L1566.6,68.7 Q1565.3,69.8 1563.8,69.8 L1559.4,69.8 Q1556.2,69.7 1555.8,65.8 Q1555.5,63.2 1556.9,61.3 L1565.5,49.3 L1562.3,40 Q1561.2,36.6 1563.4,34 L1570.2,25.4 Q1571.6,23.8 1573.6,23.8 L1585.8,23.8 Z" fill="#c8c8c8"/>
    <line x1="1590" y1="47.1" x2="1577.6" y2="61.8" stroke="#1c1c1c" stroke-width="2.9" stroke-linecap="round"/>
  </g>

  <!-- eraser -->
  <g transform="translate(1720,43.9) rotate(-45)">
    <path d="M-26.6,-11.9 L15.3,-11.9 A11.3,11.3 0 0 1 26.6,-0.6 L26.6,11.9 L-15.3,11.9 A11.3,11.3 0 0 1 -26.6,0.6 Z" fill="#c8c8c8"/>
    <rect x="-14.8" y="-13" width="1.9" height="26" fill="#1c1c1c"/>
  </g>

  <!-- layers -->
  <g>
    <rect x="1848" y="20" width="36" height="36" rx="6" ry="6" fill="#c8c8c8"/>
    <rect x="1835" y="31" width="38" height="38" rx="7" ry="7" fill="#c8c8c8" stroke="#1c1c1c" stroke-width="2"/>
  </g>

  <!-- color -->
  <circle cx="2000" cy="44" r="28.1" fill="#78ff74"/>
</svg>

<div id="sidebar">
  <div class="track" style="top:8px"></div>
  <div class="thumb" style="top:266px"></div>
  <div id="sq"></div>
  <div class="track" style="top:518px"></div>
  <div class="thumb" style="top:520px"></div>
  <svg width="80" height="1028" viewBox="0 176 80 1028">
    <g fill="none" stroke="#999" stroke-width="2">
      <path d="M31,1077.5 L45.2,1077.5 A9.75,9.75 0 0 1 45.2,1097 L28,1097"/>
    </g>
    <path d="M24,1077.5 L32,1070 L32,1085 Z" fill="#999"/>
    <g fill="none" stroke="#363636" stroke-width="2">
      <path d="M49,1157.5 L35.2,1157.5 A10,10 0 0 0 35.2,1177.5 L52,1177.5"/>
    </g>
    <path d="M56,1157.5 L48,1150 L48,1165 Z" fill="#363636"/>
  </svg>
</div>
</body>
</html>
